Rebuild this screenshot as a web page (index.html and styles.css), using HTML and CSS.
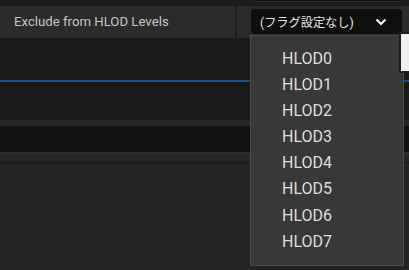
FILE: index.html
```html
<!DOCTYPE html>
<html lang="ja">

<head>
    <meta charset="UTF-8">
    <meta name="viewport" content="width=device-width, initial-scale=1.0">
    <title>HLOD</title>
    <link rel="stylesheet" href="styles.css">
</head>

<body>
    <div class="panel">
        <div class="top_strip">
            <div class="prev_combo"></div>
        </div>
        <div class="prop_row">
            <div class="prop_name">Exclude from HLOD Levels</div>
            <div class="prop_divider"></div>
            <div class="prop_value">
                <div class="combo">
                    <span class="combo_text">(フラグ設定なし)</span>
                    <svg class="chevron" width="12" height="8" viewBox="0 0 12 8">
                        <polyline points="1.5,1.5 6,6 10.5,1.5" fill="none" stroke="#f2f2f2" stroke-width="2.2" />
                    </svg>
                </div>
            </div>
        </div>
        <div class="section">
            <div class="section_top"></div>
            <div class="blue_line"></div>
            <div class="section_bottom"></div>
        </div>
        <div class="band"></div>
        <div class="dark_area"></div>
        <div class="sep_light"></div>
        <div class="sub_header"></div>
        <div class="sep_dark"></div>
        <div class="rest"></div>
    </div>

    <div class="dropdown">
        <div class="item">HLOD0</div>
        <div class="item">HLOD1</div>
        <div class="item">HLOD2</div>
        <div class="item">HLOD3</div>
        <div class="item">HLOD4</div>
        <div class="item">HLOD5</div>
        <div class="item">HLOD6</div>
        <div class="item">HLOD7</div>
    </div>
    <div class="side_popup"></div>
</body>

</html>
```

FILE: styles.css
```css
* {
    margin: 0;
    padding: 0;
    box-sizing: border-box;
}

body {
    width: 409px;
    height: 270px;
    overflow: hidden;
    background-color: #232323;
    font-family: Roboto, "Noto Sans CJK JP", sans-serif;
    position: relative;
}

.panel {
    display: flex;
    flex-direction: column;
}

.top_strip {
    height: 6px;
    background-color: #1b1b1b;
    padding-left: 251px;
}

.prev_combo {
    width: 151px;
    height: 2px;
    background-color: #111;
    border-left: 1px solid #2a2a2a;
    border-right: 1px solid #2a2a2a;
    border-bottom: 1px solid #2a2a2a;
    border-radius: 0 0 3px 3px;
}

.prop_row {
    display: flex;
    height: 32px;
    background-color: #2b2b2b;
}

.prop_name {
    width: 235px;
    padding-left: 14px;
    line-height: 32px;
    font-size: 13.2px;
    color: #c4c4c4;
}

.prop_divider {
    width: 2px;
    background-color: #1f1f1f;
}

.prop_value {
    flex: 1;
    padding: 3px 7px 0 14px;
}

.combo {
    display: flex;
    align-items: center;
    justify-content: space-between;
    height: 25px;
    padding: 0 15px 0 9px;
    background-color: #0f0f0f;
    border-radius: 4px;
}

.combo_text {
    font-size: 12.2px;
    color: #e4e4e4;
}

.chevron {
    display: block;
}

.section {
    display: flex;
    flex-direction: column;
}

.section_top {
    height: 42px;
    background-color: #1a1a1a;
}

.blue_line {
    height: 2px;
    background-color: #1c4d88;
}

.section_bottom {
    height: 38px;
    background-color: #191919;
}

.band {
    height: 6px;
    background-color: #252525;
}

.dark_area {
    height: 26px;
    background-color: #111;
}

.sep_light {
    height: 2px;
    background-color: #2e2e2e;
}

.sub_header {
    height: 7px;
    background-color: #272727;
}

.sep_dark {
    height: 3px;
    background-color: #1d1d1d;
}

.rest {
    height: 104px;
    background-color: #232323;
}

.dropdown {
    position: absolute;
    left: 250px;
    top: 35px;
    width: 154px;
    height: 231px;
    padding: 10px 0 0 31px;
    background-color: #383838;
    border: 1px solid #4a4a4a;
}

.item {
    height: 26.1px;
    line-height: 26px;
    font-size: 16px;
    color: #dedede;
}

.side_popup {
    position: absolute;
    left: 399px;
    top: 32px;
    width: 12px;
    height: 41px;
    background-color: #efefef;
    border: 2px solid #1e1e1e;
}
```
